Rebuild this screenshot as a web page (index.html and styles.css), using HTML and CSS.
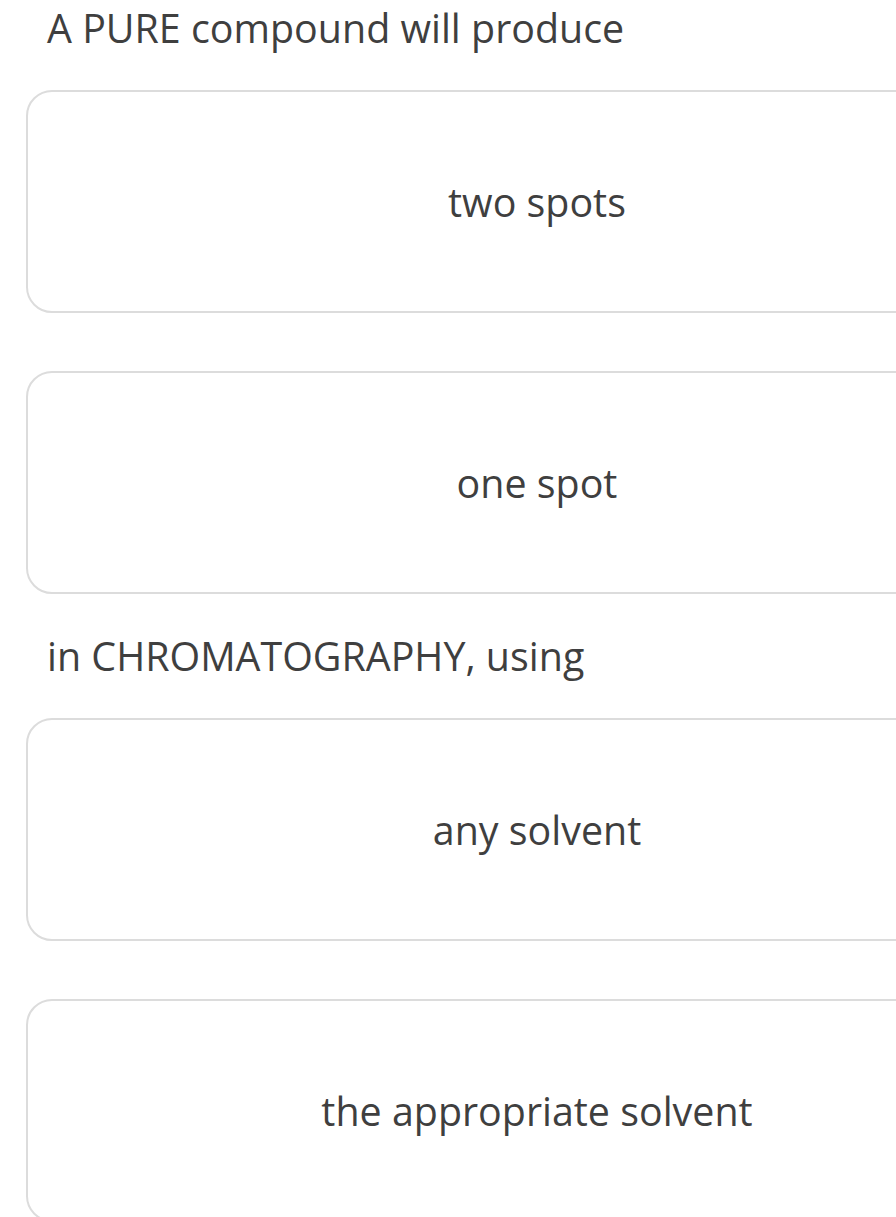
FILE: index.html
```html
<!DOCTYPE html>
<html>
<head>
<meta charset="utf-8">
<link rel="stylesheet" href="styles.css">
</head>
<body>
<main class="quiz">
  <p class="prompt">A PURE compound will produce</p>
  <div class="option"><span>two spots</span></div>
  <div class="option"><span>one spot</span></div>
  <p class="prompt prompt-mid">in CHROMATOGRAPHY, using</p>
  <div class="option"><span>any solvent</span></div>
  <div class="option"><span>the appropriate solvent</span></div>
</main>
</body>
</html>
```

FILE: styles.css
```css
html, body {
  margin: 0;
  padding: 0;
  overflow: hidden;
  background: #ffffff;
}
.quiz {
  width: 1022px;
  padding: 0 0 0 26px;
  display: flex;
  flex-direction: column;
  font-family: "Open Sans", "Liberation Sans", sans-serif;
  color: #3f3f3f;
}
.prompt {
  margin: 0;
  padding: 0 0 0 21px;
  font-size: 39.4px;
  line-height: 56px;
  height: 56px;
}
.prompt-mid {
  margin-top: 34px;
}
.option {
  box-sizing: border-box;
  height: 223px;
  border: 2px solid #dcdcdc;
  border-radius: 26px;
  display: flex;
  align-items: center;
  justify-content: center;
  font-size: 39.4px;
  margin-top: 34px;
}
.option + .option {
  margin-top: 58px;
}
```
